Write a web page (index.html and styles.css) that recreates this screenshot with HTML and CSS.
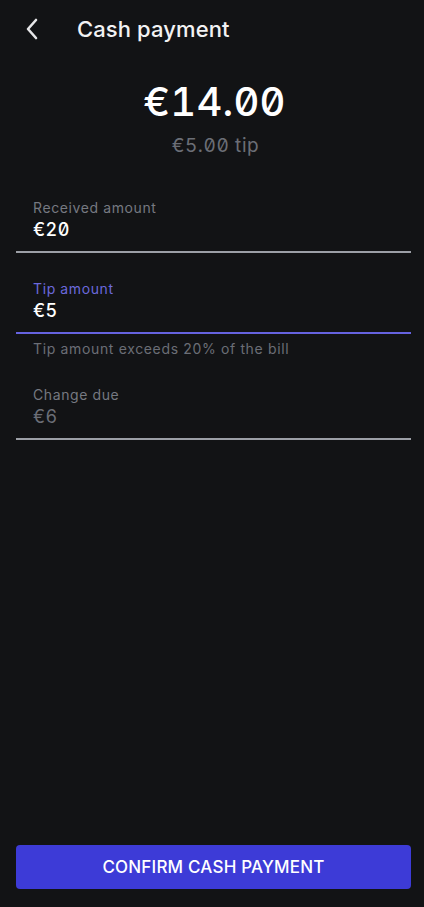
FILE: index.html
```html
<!DOCTYPE html>
<html lang="en">
<head>
<meta charset="utf-8">
<title>Cash payment</title>
<link rel="stylesheet" href="styles.css">
</head>
<body>
<div class="screen">
  <header class="topbar">
    <button class="back" aria-label="Back">
      <svg width="14" height="22" viewBox="0 0 14 22"><path d="M11 2 L3 11 L11 20" fill="none" stroke="#e6e6e8" stroke-width="2.6" stroke-linecap="round" stroke-linejoin="round"/></svg>
    </button>
    <h1 class="title">Cash payment</h1>
  </header>
  <section class="summary">
    <div class="total">€14.00</div>
    <div class="tip">€5.00 tip</div>
  </section>
  <section class="fields">
    <div class="field">
      <div class="label">Received amount</div>
      <div class="value">€20</div>
    </div>
    <div class="field focused">
      <div class="label">Tip amount</div>
      <div class="value">€5</div>
    </div>
    <div class="helper">Tip amount exceeds 20% of the bill</div>
    <div class="field disabled">
      <div class="label">Change due</div>
      <div class="value">€6</div>
    </div>
  </section>
  <div class="spacer"></div>
  <footer class="footer">
    <button class="confirm">CONFIRM CASH PAYMENT</button>
  </footer>
</div>
</body>
</html>
```
FILE: styles.css
```css
* { box-sizing: border-box; }
html, body { margin: 0; padding: 0; }
body {
  background: #121315;
  color: #ffffff;
  font-family: Inter, "Noto Sans", sans-serif;
  width: 424px;
  height: 907px;
  overflow: hidden;
}
.screen {
  display: flex;
  flex-direction: column;
  height: 907px;
  padding: 0 13px 0 16px;
}
.topbar {
  display: flex;
  align-items: center;
  height: 58px;
}
.back {
  background: none;
  border: 0;
  padding: 0;
  width: 14px;
  height: 22px;
  margin-left: 9px;
  display: flex;
}
.title {
  margin: 0 0 0 38px;
  font-size: 22px;
  font-weight: 500;
  color: #f2f2f3;
  letter-spacing: 0.1px;
}
.summary {
  display: flex;
  flex-direction: column;
  align-items: center;
  margin-top: 17px;
}
.total {
  font-size: 40px;
  font-weight: 500;
  line-height: 54px;
  font-feature-settings: "tnum", "zero";
  letter-spacing: 0.2px;
  margin-left: 2px;
}
.tip {
  font-size: 19px;
  color: #6b6e76;
  line-height: 24px;
  margin-top: 5px;
  font-feature-settings: "tnum", "zero";
  letter-spacing: 0.6px;
  margin-left: 4px;
}
.fields {
  display: flex;
  flex-direction: column;
  margin-top: 33px;
}
.field {
  padding: 8px 17px 0;
  height: 62px;
  border-bottom: 2px solid #9c9fa6;
}
.label {
  font-size: 14px;
  line-height: 18px;
  color: #767981;
  letter-spacing: 0.6px;
}
.value {
  font-size: 18px;
  line-height: 26px;
  font-weight: 500;
  color: #ffffff;
  font-feature-settings: "tnum", "zero";
  letter-spacing: 0.5px;
}
.field.focused {
  margin-top: 19px;
  border-bottom-color: #6663e0;
}
.field.focused .label { color: #6b69dc; }
.helper {
  padding: 5px 17px 0;
  font-size: 14px;
  line-height: 20px;
  color: #6b6e76;
  letter-spacing: 0.65px;
  height: 44px;
}
.field.disabled .value { color: #6b6e76; font-weight: 400; }
.spacer { flex: 1; }
.footer {
  padding-bottom: 18px;
}
.confirm {
  width: 100%;
  height: 44px;
  border: 0;
  border-radius: 4px;
  background: #3d3bd7;
  color: #ffffff;
  font-family: Inter, "Noto Sans", sans-serif;
  font-size: 17px;
  font-weight: 500;
  letter-spacing: 0.2px;
}
```
